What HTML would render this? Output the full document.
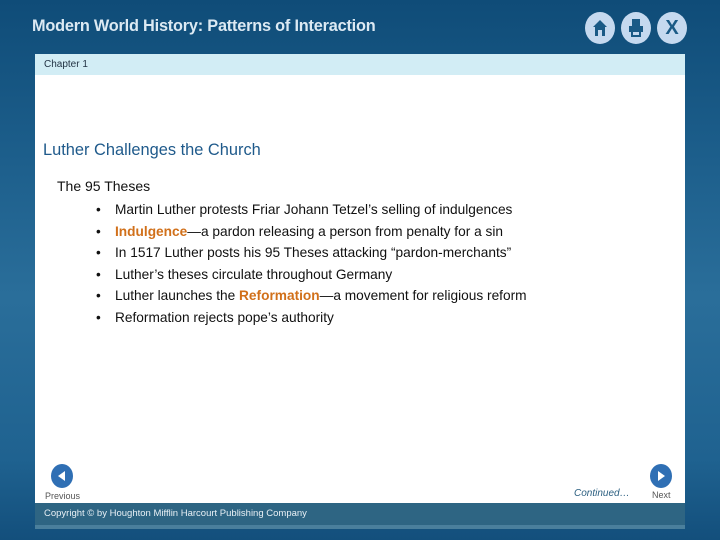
<!DOCTYPE html>
<html><head><style>
body{margin:0;width:720px;height:540px;overflow:hidden;font-family:"Liberation Sans",sans-serif;
background:linear-gradient(#0f4c78 0%,#1d5f8c 30%,#2a6e9a 55%,#1f6290 85%,#134f7c 100%);position:relative}
.t{position:absolute;left:32px;top:17px;color:#dce9f3;font-size:16.3px;font-weight:bold;letter-spacing:-0.2px}
.ic{position:absolute;top:12px;width:30px;height:32px;border-radius:50%;background:#c5d9ef}
.panel{position:absolute;left:35px;top:54px;width:650px;height:449px;background:#fff}
.ch{position:absolute;left:35px;top:54px;width:650px;height:21px;background:#d2edf5;font-size:10px;color:#234;line-height:21px}
.ch span{margin-left:9px}
.foot{position:absolute;left:35px;top:503px;width:650px;height:22px;background:#2e6583;color:#e8f0f5;font-size:9.5px;line-height:22px}
.foot2{position:absolute;left:35px;top:525px;width:650px;height:4px;background:#4a7f9c}
.h{position:absolute;left:43px;top:141px;color:#1f5a8b;font-size:16.4px}
.s{position:absolute;left:57px;top:178px;font-size:14px;color:#111}
ul{position:absolute;left:96px;top:202px;margin:0;padding:0;list-style:none;font-size:13.7px;color:#111}
li{height:21.6px;position:relative;padding-left:19px;white-space:nowrap}
li:before{content:"•";position:absolute;left:0}
.o{color:#d1701a;font-weight:bold}
.nav{position:absolute;width:22px;height:24px;border-radius:50%;background:#2f6fb4}
.sm{position:absolute;font-size:9px;color:#555}
</style></head><body>
<div class="t">Modern World History: Patterns of Interaction</div>
<div class="ic" style="left:585px"><svg width="30" height="32"><path d="M8 15 L15 8 L22 15 L20 15 L20 24 L10 24 L10 15Z" fill="#1a5a86"/><rect x="13" y="18" width="4" height="6" fill="#c5d9ef"/></svg></div>
<div class="ic" style="left:621px"><svg width="30" height="32"><rect x="11" y="7" width="8" height="7" fill="#1a5a86"/><rect x="8" y="14" width="14" height="6" fill="#1a5a86"/><rect x="10" y="20" width="10" height="5" fill="#1a5a86"/><rect x="12" y="20" width="6" height="3" fill="#c5d9ef"/></svg></div>
<div class="ic" style="left:657px;text-align:center;line-height:32px;color:#1a5a86;font-weight:bold;font-size:20px">X</div>
<div class="panel"></div>
<div class="ch"><span>Chapter 1</span></div>
<div class="h">Luther Challenges the Church</div>
<div class="s">The 95 Theses</div>
<ul>
<li>Martin Luther protests Friar Johann Tetzel’s selling of indulgences</li>
<li><span class="o">Indulgence</span>—a pardon releasing a person from penalty for a sin</li>
<li>In 1517 Luther posts his 95 Theses attacking “pardon-merchants”</li>
<li>Luther’s theses circulate throughout Germany</li>
<li>Luther launches the <span class="o">Reformation</span>—a movement for religious reform</li>
<li>Reformation rejects pope’s authority</li>
</ul>
<div class="nav" style="left:51px;top:464px"><svg width="22" height="24"><path d="M7 12 L14 7 L14 17Z" fill="#fff"/></svg></div>
<div class="sm" style="left:45px;top:491px">Previous</div>
<div class="nav" style="left:650px;top:464px"><svg width="22" height="24"><path d="M15 12 L8 7 L8 17Z" fill="#fff"/></svg></div>
<div class="sm" style="left:652px;top:490px">Next</div>
<div class="sm" style="left:574px;top:488px;color:#2b5f80;font-style:italic;font-size:10px">Continued…</div>
<div class="foot"><span style="margin-left:9px">Copyright © by Houghton Mifflin Harcourt Publishing Company</span></div>
<div class="foot2"></div>
</body></html>
